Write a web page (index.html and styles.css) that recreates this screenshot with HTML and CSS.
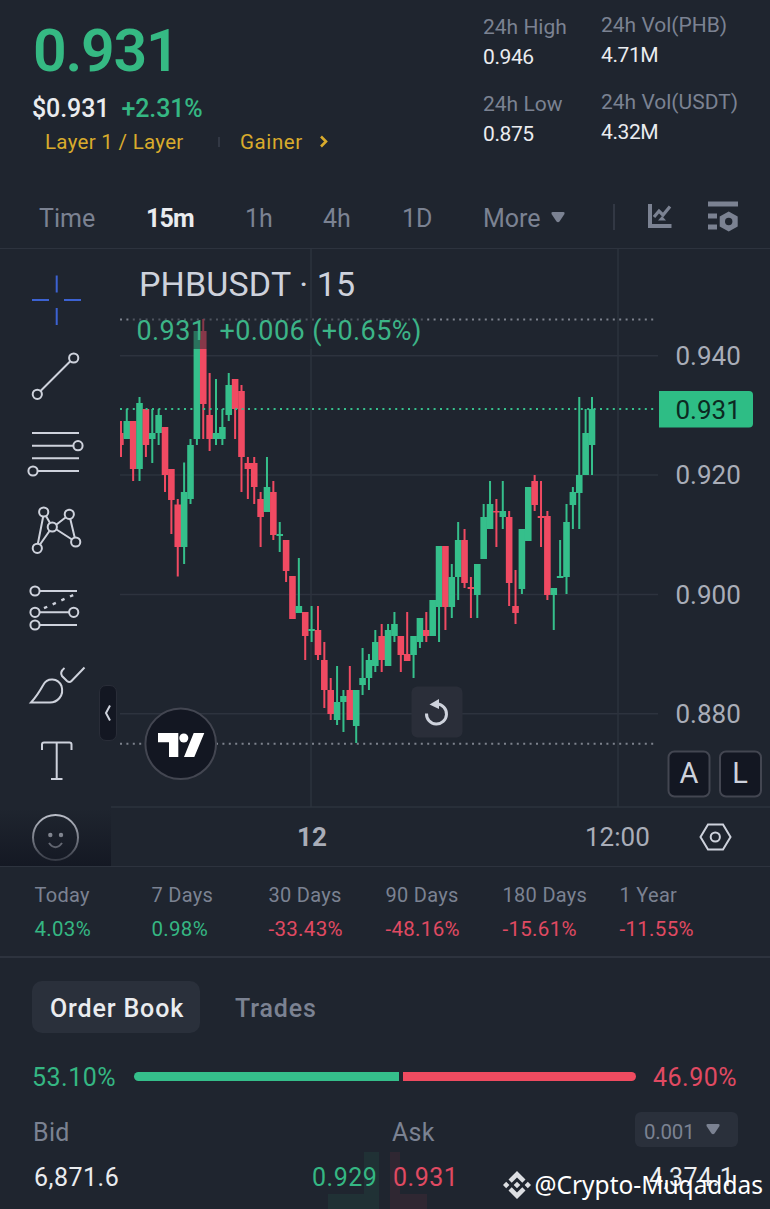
FILE: index.html
```
<!DOCTYPE html>
<html lang="en">
<head>
    <meta charset="UTF-8">
    <meta name="viewport" content="width=device-width, initial-scale=1.0">
    <title>PHB/USDT</title>
    <link rel="stylesheet" href="styles.css">
</head>
<body>
    <header class="header">
        <div class="summary">
            <div class="price">0.931</div>
            <div class="fiat"><span class="usd">$0.931</span><span class="change">+2.31%</span></div>
            <div class="tags">
                <span class="layer">Layer 1 / Layer</span>
                <i class="tagDivider"></i>
                <span class="gainer">Gainer</span>
                <svg width="10" height="14" viewBox="0 0 10 14"><path d="M2 1.500l5 5-5 5" fill="none" stroke="#d9ab2c" stroke-width="2.6"/></svg>
            </div>
        </div>
        <div class="dayStats">
            <div class="label">24h High</div>
            <div class="value">0.946</div>
            <div class="label">24h Low</div>
            <div class="value">0.875</div>
        </div>
        <div class="dayStats volume">
            <div class="label">24h Vol(PHB)</div>
            <div class="value">4.71M</div>
            <div class="label">24h Vol(USDT)</div>
            <div class="value">4.32M</div>
        </div>
    </header>

    <nav class="intervals">
        <span>Time</span>
        <span class="active">15m</span>
        <span>1h</span>
        <span>4h</span>
        <span>1D</span>
        <span class="more">More <svg width="14" height="11" viewBox="0 0 14 11"><path d="M1.500 0h11q1.500 0 1 2L8.500 9.500q-1.500 1.500-3 0L.500 2q-.500-2 1-2z" fill="#7b8292"/></svg></span>
        <i class="navDivider"></i>
        <svg width="24" height="25" viewBox="0 0 24 25">
            <path d="M2 0v22h21.500" fill="none" stroke="#7b8292" stroke-width="4"/>
            <path d="M6 13l5-6 4 4 7-8.500" fill="none" stroke="#7b8292" stroke-width="3.200"/>
            <path d="M10 16.500l4-4.500 4 4.500z" fill="#7b8292"/>
        </svg>
        <svg width="30" height="31" viewBox="0 0 30 31">
            <path d="M0 .5h30v5H0zM0 12.500h9v5H0zM0 23.500h9v5H0z" fill="#7b8292"/>
            <path d="M20.700 10.500l9 5v10l-9 5-9-5v-10z" fill="#7b8292"/>
            <circle cx="20.700" cy="20.500" r="3.700" fill="#1f252f"/>
        </svg>
    </nav>

    <main class="chart">
        <svg class="tools" width="111" height="617" viewBox="0 249 111 617" fill="none" stroke="#ced2dc" stroke-width="2">
            <defs>
                <linearGradient id="fade" x1="0" y1="0" x2="0" y2="1">
                    <stop offset="0" stop-color="#131722" stop-opacity="0"/>
                    <stop offset="1" stop-color="#131722" stop-opacity=".9"/>
                </linearGradient>
            </defs>
            <!-- crosshair -->
            <path d="M32 300h17M64 300h17M56.700 275.500v17M56.700 308v17" stroke="#3c62d2"/>
            <!-- trend line -->
            <path d="M40.500 391l30-30"/>
            <circle cx="73.700" cy="358" r="4.600"/><circle cx="37.300" cy="394.300" r="4.600"/>
            <!-- fib levels -->
            <path d="M32 433h47M32 445.700h41.500M32 458.300h47M38 471h41"/>
            <circle cx="78" cy="445.700" r="4.600"/><circle cx="33" cy="471" r="4.600"/>
            <!-- pattern -->
            <path d="M43.200 516.500l-5.300 27M46 516l4 7M49.500 531l-9.500 13.500M56.500 524.500l9-7M70.300 519l4.400 18.500M56.500 529.500l15.500 10"/>
            <circle cx="43.700" cy="512" r="4.600"/><circle cx="69.300" cy="514.300" r="4.600"/><circle cx="52.300" cy="527" r="4.600"/>
            <circle cx="37.300" cy="548.300" r="4.600"/><circle cx="75.700" cy="542" r="4.600"/>
            <!-- forecast -->
            <path d="M40 591h37M40 612.300h29M40 625h37"/>
            <path d="M44 608.200l30-13.500" stroke-width="2.400" stroke-dasharray="3.500 6"/>
            <circle cx="35" cy="591" r="4.600"/><circle cx="35" cy="612.300" r="4.600"/><circle cx="73.700" cy="612.300" r="4.600"/><circle cx="35" cy="625" r="4.600"/>
            <!-- brush -->
            <path d="M31 702.500C37 696 41 689 43.500 684.500C47 677.500 58 677.500 61.500 686C64.500 696 57 702.500 50 702.500z"/>
            <path d="M84.500 667.500L71.500 681Q69.500 683 67 681L62 676Q59.500 672 64.500 668"/>
            <!-- text -->
            <path d="M42 750v-5.500q0-2 2-2h25.500q2 0 2 2v5.500M56.700 742.500v36.500M51 779h11.500"/>
            <!-- emoji -->
            <circle cx="55.500" cy="837.500" r="22.500"/>
            <path d="M49 843q6.500 8.500 13 0"/>
            <g fill="#ced2dc" stroke="none"><circle cx="50.300" cy="835" r="2.200"/><circle cx="61" cy="835" r="2.200"/></g>
            <rect y="808" width="111" height="58" fill="url(#fade)" stroke="none"/>
        </svg>

        <svg class="plot" width="659" height="617" viewBox="111 249 659 617">
            <g stroke="#2d333e" stroke-width="1.500">
                <path d="M120 355.800h538M120 475h538M120 594.500h538M120 713.700h538"/>
                <path d="M311 249v558M618 249v558M111 807h659"/>
            </g>
            <g fill="none" stroke="#7d828d" stroke-width="2" stroke-dasharray="2 4.400">
                <path d="M120 319.500h536M120 743.700h536"/>
            </g>
            <g id="candles"></g>
            <path d="M120 409h536" stroke="#35bf8b" stroke-width="2" stroke-dasharray="2 4.400"/>

            <!-- legend -->
            <rect x="131" y="318" width="292" height="31" fill="#1f252f" opacity=".5"/>
            <text class="symbol" x="139" y="296">PHBUSDT · 15</text>
            <text class="quote" x="136.500" y="339.500">0.931</text>
            <text class="quote" x="219.500" y="339.500">+0.006 (+0.65%)</text>

            <!-- price scale -->
            <g class="scale">
                <text x="675.500" y="364.700">0.940</text>
                <text x="675.500" y="484.200">0.920</text>
                <text x="675.500" y="603.700">0.900</text>
                <text x="675.500" y="723.300">0.880</text>
                <text x="585" y="846">12:00</text>
                <text class="day" x="297" y="846">12</text>
            </g>
            <path d="M659 391h90q4 0 4 4v28.500q0 4-4 4h-90z" fill="#2ebd85"/>
            <text class="last" x="675.500" y="418.700">0.931</text>

            <g fill="#131722" stroke="#434651" stroke-width="2">
                <rect x="668.500" y="751.500" width="41" height="45" rx="6"/>
                <rect x="720" y="751.500" width="41" height="45" rx="6"/>
            </g>
            <text class="mode" x="689" y="783">A</text>
            <text class="mode" x="740" y="783">L</text>

            <g fill="none" stroke="#ced2dc" stroke-width="2">
                <path d="M708 824.500h15l7.500 12.500-7.500 12.500h-15l-7.500-12.500z"/>
                <circle cx="715.300" cy="837" r="4.600"/>
            </g>

            <!-- reset button -->
            <rect x="411.500" y="686.500" width="51" height="51" rx="6" fill="#2a2e39"/>
            <path d="M437 704a10 10 0 1 1-10.500 9.500" fill="none" stroke="#ced2dc" stroke-width="3"/>
            <path d="M429.500 704.500l9.500-5.500v10z" fill="#ced2dc"/>

            <!-- TradingView badge -->
            <circle cx="180.700" cy="743.800" r="35.300" fill="#131722" stroke="#434651" stroke-width="2"/>
            <g fill="#fff">
                <path d="M158 733h20.300v24H169v-14.700h-11zM193.700 733h10.600l-10 24H184z"/>
                <circle cx="183.800" cy="738" r="4.500"/>
            </g>
        </svg>

        <div class="collapse">
            <svg width="8" height="18" viewBox="0 0 8 18"><path d="M6 1.500L2 9l4 7.500" fill="none" stroke="#ced2dc" stroke-width="2"/></svg>
        </div>
    </main>

    <section class="periods">
        <div>Today<b class="up">4.03%</b></div>
        <div>7 Days<b class="up">0.98%</b></div>
        <div>30 Days<b class="down">-33.43%</b></div>
        <div>90 Days<b class="down">-48.16%</b></div>
        <div>180 Days<b class="down">-15.61%</b></div>
        <div>1 Year<b class="down">-11.55%</b></div>
    </section>

    <section class="book">
        <div class="bookTabs">
            <span class="bookTab selected">Order Book</span>
            <span class="bookTab">Trades</span>
        </div>
        <div class="ratio">
            <span class="up">53.10%</span>
            <i class="bar bid"></i>
            <i class="bar ask"></i>
            <span class="down">46.90%</span>
        </div>
        <div class="bookHead">
            <span class="side">Bid</span>
            <span class="side">Ask</span>
            <span class="tick">0.001 <svg width="14" height="11" viewBox="0 0 14 11"><path d="M1.500 0h11q1.500 0 1 2L8.500 9.500q-1.500 1.500-3 0L.500 2q-.500-2 1-2z" fill="#7b8292"/></svg></span>
        </div>
        <div class="bookRow">
            <svg class="depth" width="100" height="57" viewBox="328 1152 100 57">
                <path d="M364 1152h15v57h-51v-15h36z" fill="#2ebd85" opacity=".08"/>
                <path d="M390 1152h10v42h27v15h-37z" fill="#f6465d" opacity=".08"/>
            </svg>
            <span class="amount">6,871.6</span>
            <span class="up">0.929</span>
            <span class="down">0.931</span>
            <span class="amount">4,374.1</span>
        </div>
    </section>

    <div class="watermark">
        <svg width="28" height="28" viewBox="0 0 28 28" fill="#dcdee2">
            <path d="M14 0l8.500 8.500-3.200 3.200L14 6.400l-5.300 5.300-3.200-3.200zM14 28l8.500-8.500-3.200-3.200-5.300 5.300-5.300-5.300-3.200 3.200zM14 10.700l3.300 3.300-3.300 3.300-3.300-3.300zM3.200 10.800L6.400 14l-3.200 3.200L0 14zM24.800 10.800L28 14l-3.200 3.200-3.200-3.200z"/>
        </svg>
        <span>@Crypto-Muqaddas</span>
    </div>

    <script>
        // [wick top, body top, body bottom, wick bottom, 1 = up / 0 = down]
        const candles = [
            [421,433,445,457,0],[409,421,439,439,1],[421,421,469,481,0],[397,403,469,481,1],[409,409,445,457,0],
            [409,433,439,463,1],[409,415,433,445,1],[427,427,475,492,0],[469,469,500,534,0],[499,504.5,547,576.5,0],
            [462.5,492,547,564,1],[439,445,499,504,1],[331,331,439,445,1],[319,331,404,439,0],[373,415,439,451,0],
            [379,433,439,445,1],[409,427,439,445,1],[373,385,415,421,1],[379,379,409,439,0],[385,391,457,492,0],
            [457,463,469,499,0],[457,463,487,504,0],[492,499,517,547,0],[457,487,512,512,1],[481,492,535,540,0],
            [522,534,536,552,1],[540,540,571,582,0],[576,576,619,619,0],[558,606,613,613,1],[612,612,636,660,0],
            [606,629,631,642,1],[606,630,655,660,0],[642,660,690,708,0],[678,690,714,720,0],[666,702,720,725,1],
            [690,696,702,732,1],[666,690,720,720,0],[690,690,726,743,1],[648,678,685,695,1],[654,660,678,690,1],
            [630,642,666,672,1],[624,636,660,672,0],[624,630,666,666,1],[612,624,636,642,1],[636,636,655,672,0],
            [612,654,661,661,0],[636,636,655,678,1],[618,618,642,648,1],[612,630,636,642,0],[600,600,636,636,1],
            [546,546,607,642,1],[546,546,607,630,0],[564,577,607,618,1],[522,540,577,600,1],[529,540,583,588,0],
            [577,587,589,618,0],[564,564,595,618,1],[504,517,559,559,1],[481,504,529,529,1],[499,511,512.5,547,0],
            [481,511,517,529,1],[511,517,583,606,0],[570,606,613,624,0],[529,529,589,594,1],[487,487,541,541,1],
            [475,481,505,511,0],[481,516,518,547,0],[511,516,595,600,0],[588,588,595,630,1],[540,576,578,578,1],
            [504,522,577,594,1],[487,492,505,529,1],[397,475,493,529,1],[409,433,475,475,1],[397,409,445,475,1]
        ];
        const step = 6.373;
        const left = 120;

        function addRect(parent, x, y, width, height, fill) {
            const rect = document.createElementNS('http://www.w3.org/2000/svg', 'rect');
            rect.setAttribute('x', x);
            rect.setAttribute('y', y);
            rect.setAttribute('width', width);
            rect.setAttribute('height', height);
            rect.setAttribute('fill', fill);
            parent.appendChild(rect);
        }

        const group = document.getElementById('candles');
        candles.forEach(([high, top, bottom, low, up], i) => {
            const x = 120.4 + i * step;
            const color = up ? '#35bf8b' : '#f04a62';
            const start = Math.max(left, x - 3.3);
            addRect(group, Math.max(left, x - 1), high, 2, low - high, color);
            addRect(group, start, top, x + 3.3 - start, bottom - top, color);
        });
    </script>
</body>
</html>
```
FILE: styles.css
```
* {
    box-sizing: border-box;
}
body {
    margin: 0;
    width: 770px;
    height: 1209px;
    overflow: hidden;
    position: relative;
    background: #1f252f;
    color: #7b8292;
    font-family: Roboto, sans-serif;
}
svg {
    display: block;
}
.up {
    color: #35b783;
}
.down {
    color: #e04a62;
}

/* price header */
.header {
    display: flex;
    height: 185px;
    padding-left: 33px;
}
.summary {
    width: 450px;
    padding-top: 19px;
}
.price {
    font-size: 59px;
    line-height: 64px;
    font-weight: 600;
    letter-spacing: -1.2px;
    color: #35b983;
}
.fiat {
    display: flex;
    gap: 12px;
    margin-top: 11px;
    font-size: 25px;
    line-height: 30px;
    font-weight: 500;
    letter-spacing: -0.1px;
}
.usd {
    margin-left: -1px;
    color: #eaecef;
}
.change {
    color: #35b783;
}
.tags {
    display: flex;
    align-items: center;
    margin: 5px 0 0 12px;
    font-size: 20.5px;
    line-height: 26px;
    color: #d9ab2c;
}
.layer {
    width: 173px;
    letter-spacing: 0.3px;
}
.tagDivider {
    width: 2px;
    height: 10px;
    margin-right: 20px;
    background: #323844;
}
.gainer {
    width: 79px;
    letter-spacing: 0.6px;
}
.dayStats {
    width: 118px;
    padding-top: 12px;
    white-space: nowrap;
}
.volume {
    padding-top: 10px;
}
.label {
    font-size: 21px;
    line-height: 30px;
}
.value {
    margin-bottom: 17px;
    font-size: 21px;
    line-height: 30px;
    letter-spacing: -0.4px;
    color: #eaecef;
}

/* interval row */
.intervals {
    display: grid;
    grid-template-columns: 107px 99px 78px 79px 81px 129px 35px 60px 30px;
    align-items: center;
    height: 64px;
    padding-left: 40px;
    border-bottom: 1px solid #2d333e;
    font-size: 25px;
}
.intervals span {
    margin-left: -1px;
    padding-top: 4px;
}
.intervals .active {
    color: #eaecef;
    font-weight: 700;
    letter-spacing: -0.8px;
}
.more {
    display: flex;
    align-items: center;
    gap: 10px;
}
.more svg {
    margin-top: -3px;
}
.navDivider {
    width: 2px;
    height: 26px;
    background: #323844;
}

/* chart */
.chart {
    position: relative;
    display: flex;
    height: 617px;
}
.symbol {
    font-size: 34px;
    letter-spacing: 0.15px;
    fill: #ced2dc;
}
.quote {
    font-size: 27px;
    letter-spacing: 0.4px;
    fill: #3cb487;
}
.scale {
    font-size: 26px;
    fill: #a9adb8;
}
.day {
    font-weight: 700;
}
.last {
    font-size: 26px;
    fill: #0c2a22;
}
.mode {
    font-size: 29px;
    text-anchor: middle;
    fill: #ced2dc;
}
.collapse {
    position: absolute;
    left: 99px;
    top: 436px;
    display: flex;
    align-items: center;
    justify-content: center;
    width: 18px;
    height: 56px;
    border: 1px solid #292d38;
    border-radius: 7px;
    background: #131722;
}

/* performance */
.periods {
    display: grid;
    grid-template-columns: repeat(6, 117px);
    height: 92px;
    padding: 14px 0 0 34.5px;
    border-top: 1px solid #2d333e;
    border-bottom: 2px solid #2d333e;
    font-size: 20px;
    line-height: 28px;
    letter-spacing: 0.3px;
    white-space: nowrap;
}
.periods b {
    display: block;
    margin-top: 6px;
    font-size: 20.5px;
    font-weight: 400;
}

/* order book */
.bookTabs {
    display: flex;
    gap: 17px;
    padding: 23px 0 0 32px;
    font-size: 25px;
    line-height: 52px;
}
.bookTab {
    padding: 2px 16px 0 18px;
    height: 52px;
    border-radius: 10px;
    font-weight: 500;
    letter-spacing: 0.85px;
}
.bookTab.selected {
    background: #2a303b;
    color: #eaecef;
}
.ratio {
    display: flex;
    align-items: center;
    height: 30px;
    margin-top: 28px;
    padding-left: 32px;
    font-size: 25px;
    letter-spacing: 0.5px;
}
.ratio span {
    width: 102px;
    padding-top: 2px;
}
.bar {
    height: 9px;
}
.bid {
    width: 265px;
    margin-right: 4px;
    border-radius: 5px 0 0 5px;
    background: #35bf8b;
}
.ask {
    width: 233px;
    margin-right: 17px;
    border-radius: 0 5px 5px 0;
    background: #ef4b60;
}
.bookHead {
    display: grid;
    grid-template-columns: 359px 243px 103px;
    align-items: center;
    height: 35px;
    margin-top: 21px;
    padding-left: 33px;
    font-size: 25px;
}
.side {
    padding-top: 6px;
    letter-spacing: 0.3px;
}
.tick {
    display: flex;
    align-items: center;
    gap: 11px;
    height: 35px;
    padding: 4px 0 0 9px;
    border-radius: 6px;
    background: #2a303b;
    font-size: 20.5px;
    letter-spacing: -0.2px;
}
.tick svg {
    margin-top: -5px;
}
.bookRow {
    position: relative;
    display: grid;
    grid-template-columns: 278px 81px 256px auto;
    height: 57px;
    margin-top: 5px;
    padding-left: 34px;
    font-size: 25px;
    line-height: 52px;
    letter-spacing: 0.5px;
}
.bookRow span {
    position: relative;
}
.depth {
    position: absolute;
    left: 328px;
    top: 0;
}
.amount {
    color: #eaecef;
}

.watermark {
    position: absolute;
    right: 7px;
    bottom: 6px;
    display: flex;
    align-items: center;
    gap: 3px;
    color: #fff;
    font-family: "Noto Sans", sans-serif;
    font-size: 24.5px;
    line-height: 36px;
}
```
